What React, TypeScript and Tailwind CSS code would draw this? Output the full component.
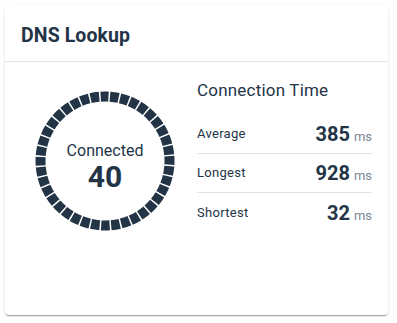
import React from 'react';

const rows = [
  { label: 'Average', value: '385' },
  { label: 'Longest', value: '928' },
  { label: 'Shortest', value: '32' },
];

const Ring: React.FC = () => {
  const r = 64.5;
  const c = 2 * Math.PI * r;
  const seg = c / 40;
  return (
    <svg width="140" height="140" viewBox="0 0 140 140">
      <circle
        cx="70"
        cy="70"
        r={r}
        fill="none"
        stroke="#233446"
        strokeWidth="10"
        style={{ strokeDasharray: `${seg - 1.5} 1.5`, strokeDashoffset: seg / 2 }}
        transform="rotate(-90 70 70)"
      />
    </svg>
  );
};

const App: React.FC = () => {
  return (
    <div className="w-[397px] h-[323px] bg-white p-[5px] font-['Roboto',sans-serif] text-[#233446]">
      <div className="h-[310px] w-[383px] rounded-[4px] bg-white shadow-[0_2px_1px_-1px_rgba(0,0,0,0.2),0_1px_1px_0_rgba(0,0,0,0.14),0_1px_3px_0_rgba(0,0,0,0.12)]">
        {/* header */}
        <div className="h-[57px] border-b border-[#e3e3e3] px-4 pt-[6px] flex items-center">
          <h2 className="text-[19.5px] font-bold tracking-[0.1px]">DNS Lookup</h2>
        </div>

        <div className="flex">
          {/* ring */}
          <div className="w-[192px] pt-[29px] pl-[30px]">
            <div className="relative w-[140px] h-[140px]">
              <Ring />
              <div className="absolute inset-0 flex flex-col items-center pt-[50px]">
                <span className="text-[16px] leading-[19px]">Connected</span>
                <span className="text-[30px] font-bold leading-[34px]">40</span>
              </div>
            </div>
          </div>

          {/* stats */}
          <div className="flex-1 pr-4 pt-[18px]">
            <div className="text-[17px] leading-[20px] tracking-[0.2px] pb-[15px]">Connection Time</div>
            {rows.map((row, i) => (
              <div
                key={row.label}
                className={`flex items-center justify-between h-[39px] ${i < rows.length - 1 ? 'border-b border-[#e3e3e3]' : ''}`}
              >
                <span className="text-[13px] tracking-[0.3px]">{row.label}</span>
                <span className="flex items-baseline gap-[4px]">
                  <span className="text-[20px] font-bold">{row.value}</span>
                  <span className="text-[13px] text-[#7b8591]">ms</span>
                </span>
              </div>
            ))}
          </div>
        </div>
      </div>
    </div>
  );
};

export default App;
